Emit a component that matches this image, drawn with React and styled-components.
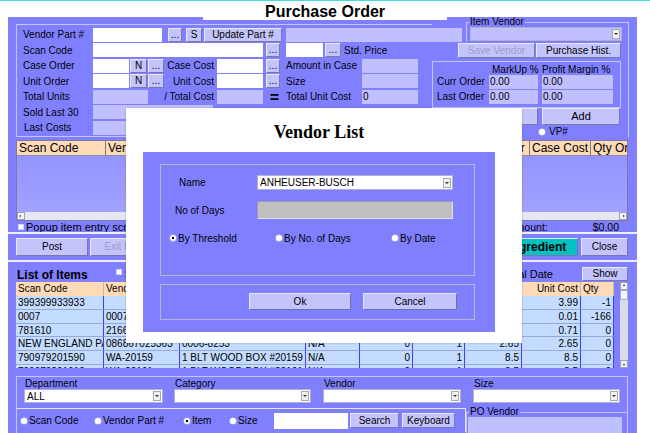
import styled, { createGlobalStyle } from "styled-components";

const GlobalStyle = createGlobalStyle`
  html, body { margin: 0; padding: 0; background: #ffffff; }
  body {
    font-family: "Liberation Sans", Arial, sans-serif;
    font-size: 10px;
    color: #000;
  }
  *, *::before, *::after { box-sizing: border-box; }
`;

const scanColumns = [
  { name: "Scan Code", w: 89 },
  { name: "Vendor Part #", w: 104 },
  { name: "Description", w: 150 },
  { name: "Size", w: 50 },
  { name: "Unit Cost", w: 60 },
  { name: "Qty Order", w: 60 },
  { name: "Case Cost", w: 61 },
  { name: "Qty Ordered", w: 80 },
];

const listColumns = [
  { name: "Scan Code", w: 88 },
  { name: "Vendor Part #", w: 76 },
  { name: "Description", w: 126 },
  { name: "Size", w: 54 },
  { name: "On Hand", w: 53, right: true },
  { name: "Case Qty", w: 52, right: true },
  { name: "Case Cost", w: 57, right: true },
  { name: "Unit Cost", w: 59, right: true, headRight: true },
  { name: "Qty", w: 33, right: true },
];

const items = [
  ["399399933933", "", "", "", "0", "1", "3.99", "3.99", "-1"],
  ["0007", "0007", "ITEM 0007", "N/A", "0", "1", "0.01", "0.01", "-166"],
  ["781610", "21660", "ITEM 781610", "N/A", "0", "1", "0.71", "0.71", "0"],
  ["NEW ENGLAND PATRIOTS", "086867025363", "0006-8253", "N/A", "0", "1", "2.65", "2.65", "0"],
  ["790979201590", "WA-20159", "1 BLT WOOD BOX #20159", "N/A", "0", "1", "8.5", "8.5", "0"],
  ["790979201613", "WA-20161", "1 BLT WOOD BOX #20161", "N/A", "0", "1", "8.5", "8.5", "0"],
];

export default function App() {
  return (
    <>
      <GlobalStyle />
      <Page>
        <Title>
          <span>Purchase Order</span>
        </Title>
        <Panel>
          <TopSection>
            <EntryGroup>
              <Row>
                <Lbl $w={70}>Vendor Part #</Lbl>
                <Field $w={69} />
                <Btn $w={14} $ml={6}>...</Btn>
                <Btn $w={16} $ml={4}>S</Btn>
                <Btn $w={78} $ml={2}>Update Part #</Btn>
                <Field $w={176} $ml={4} $light />
              </Row>
              <Row>
                <Lbl $w={70}>Scan Code</Lbl>
                <Field $w={170} />
                <Btn $w={14} $ml={3}>...</Btn>
                <Field $w={37} $ml={6} />
                <Btn $w={16} $ml={2}>...</Btn>
                <Lbl $w={60} $ml={3}>Std. Price</Lbl>
              </Row>
              <Row>
                <Lbl $w={70}>Case Order</Lbl>
                <Field $w={36} />
                <Btn $w={17} $ml={1}>N</Btn>
                <Btn $w={16} $ml={1}>...</Btn>
                <Lbl $w={50} $right>Case Cost</Lbl>
                <Field $w={46} $ml={3} />
                <Btn $w={14} $ml={3}>...</Btn>
                <Lbl $w={76} $ml={6}>Amount in Case</Lbl>
                <Field $w={56} $light />
              </Row>
              <Row>
                <Lbl $w={70}>Unit Order</Lbl>
                <Field $w={36} />
                <Btn $w={17} $ml={1}>N</Btn>
                <Btn $w={16} $ml={1}>...</Btn>
                <Lbl $w={50} $right>Unit Cost</Lbl>
                <Field $w={46} $ml={3} />
                <Btn $w={14} $ml={3}>...</Btn>
                <Lbl $w={76} $ml={6}>Size</Lbl>
                <Field $w={56} $light />
              </Row>
              <Row>
                <Lbl $w={70}>Total Units</Lbl>
                <Field $w={55} $light />
                <Lbl $w={66} $right>/ Total Cost</Lbl>
                <Field $w={46} $ml={3} $light />
                <Equals>=</Equals>
                <Lbl $w={76}>Total Unit Cost</Lbl>
                <Field $w={56} $light>0</Field>
              </Row>
              <Row>
                <Lbl $w={70}>Sold Last 30</Lbl>
                <Field $w={120} $light />
              </Row>
              <Row>
                <Lbl $w={70} $pl={1}>Last Costs</Lbl>
                <Field $w={120} $light />
              </Row>
            </EntryGroup>

            <RightColumn>
              <Frame $ml={34} $w={163}>
                <legend>Item Vendor</legend>
                <Combo $w={152} $ml={3} $bg="#c0c0ff">
                  <span />
                  <Arrow />
                </Combo>
              </Frame>
              <LowerRight>
                <Row $h={15} $mt={1}>
                  <Btn $w={77} $h={15} $ml={26} $dim>Save Vendor</Btn>
                  <Btn $w={85} $h={15} $ml={1}>Purchase Hist.</Btn>
                </Row>
                <MarkupBox>
                  <span />
                  <MarkHead $pl={3}>MarkUp %</MarkHead>
                  <MarkHead>Profit Margin %</MarkHead>
                  <MarkLabel>Curr Order</MarkLabel>
                  <Field $w={49} $light>0.00</Field>
                  <Field $w={71} $light>0.00</Field>
                  <MarkLabel>Last Order</MarkLabel>
                  <Field $w={49} $light>0.00</Field>
                  <Field $w={71} $light>0.00</Field>
                </MarkupBox>
                <Row $h={17}>
                  <Btn $w={68} $h={17} $ml={38} $fs={11}>Clear</Btn>
                  <Btn $w={78} $h={17} $ml={4} $fs={11}>Add</Btn>
                </Row>
                <Row $h={9} $mt={2}>
                  <Radio $ml={107} />
                  <Lbl $w={30} $ml={2}>VP#</Lbl>
                </Row>
              </LowerRight>
            </RightColumn>
          </TopSection>

          <ScanTable>
            <ScanHead>
              {scanColumns.map((c) => (
                <ScanHeadCell key={c.name} $w={c.w}>
                  {c.name}
                </ScanHeadCell>
              ))}
            </ScanHead>
            <ScanBody />
            <HScroll>
              <ScrollArrow $dir="left" />
              <ScrollTrack />
              <ScrollArrow $dir="right" />
            </HScroll>
          </ScanTable>

          <PopupRow>
            <Check $ml={2} />
            <PopupText>Popup item entry screen</PopupText>
            <Grow />
            <span>Total Amount:</span>
            <AmountValue>$0.00</AmountValue>
          </PopupRow>

          <Separator />

          <ActionRow>
            <Btn $w={72} $h={18}>Post</Btn>
            <Btn $w={72} $h={18} $ml={2} $dim>Exit Form</Btn>
            <Btn $w={72} $h={18} $ml={2}>Print</Btn>
            <Btn $w={72} $h={18} $ml={2}>Receive</Btn>
            <Grow />
            <Btn $w={108} $h={18} $teal $bold $fs={12}>Add Ingredient</Btn>
            <Btn $w={47} $h={18} $ml={3}>Close</Btn>
          </ActionRow>

          <Separator $mt={4} />

          <ListHeader>
            <ListTitle>List of Items</ListTitle>
            <Check $ml={28} $mb={7} />
            <ListHeadText $ml={3}>Show All Items</ListHeadText>
            <Grow />
            <ListHeadText>Sort by Arrival Date</ListHeadText>
            <Btn $w={46} $h={14} $ml={29} $mb={1}>Show</Btn>
          </ListHeader>

          <ListArea>
            <ListTable>
              <ListHeadRow>
                {listColumns.map((c) => (
                  <ListHeadCell key={c.name} $w={c.w} $right={c.headRight}>
                    {c.name}
                  </ListHeadCell>
                ))}
              </ListHeadRow>
              {items.map((row, i) => (
                <ListRow key={i}>
                  {row.map((v, j) => (
                    <ListCell key={j} $w={listColumns[j].w} $right={listColumns[j].right}>
                      {v}
                    </ListCell>
                  ))}
                </ListRow>
              ))}
            </ListTable>
            <VScroll>
              <ScrollArrow $dir="up" />
              <VThumb />
              <Grow />
              <ScrollArrow $dir="down" />
            </VScroll>
          </ListArea>

          <FilterBox>
            <FilterTop>
              <FilterCol $ml={7}>
                <FilterLabel>Department</FilterLabel>
                <Combo $w={139}>
                  <span>ALL</span>
                  <Arrow />
                </Combo>
              </FilterCol>
              <FilterCol $ml={11}>
                <FilterLabel>Category</FilterLabel>
                <Combo $w={137}>
                  <span />
                  <Arrow />
                </Combo>
              </FilterCol>
              <FilterCol $ml={12}>
                <FilterLabel>Vendor</FilterLabel>
                <Combo $w={138}>
                  <span />
                  <Arrow />
                </Combo>
              </FilterCol>
              <FilterCol $ml={12}>
                <FilterLabel>Size</FilterLabel>
                <Combo $w={147}>
                  <span />
                  <Arrow />
                </Combo>
              </FilterCol>
            </FilterTop>
            <FilterBottom>
              <SearchArea>
                <RadioItem $w={74}>
                  <Radio />
                  Scan Code
                </RadioItem>
                <RadioItem $w={89}>
                  <Radio />
                  Vendor Part #
                </RadioItem>
                <RadioItem $w={46}>
                  <Radio $on />
                  Item
                </RadioItem>
                <RadioItem $w={44}>
                  <Radio />
                  Size
                </RadioItem>
                <Field $w={74} $h={16} />
                <Btn $w={49} $h={15} $ml={2}>Search</Btn>
                <Btn $w={53} $h={15} $ml={3}>Keyboard</Btn>
              </SearchArea>
              <Frame $w={162} $mt={-1}>
                <legend>PO Vendor</legend>
                <Field $w={154} $h={16} $ml={1} $light />
              </Frame>
            </FilterBottom>
          </FilterBox>
        </Panel>

        <Dialog>
          <DialogTitle>Vendor List</DialogTitle>
          <DialogBody>
            <GroupBox $h={112}>
              <DRow $h={15} $mt={10}>
                <DLabel $pl={18}>Name</DLabel>
                <Combo $w={196} $h={15}>
                  <span>ANHEUSER-BUSCH</span>
                  <Arrow />
                </Combo>
              </DRow>
              <DRow $h={18} $mt={11}>
                <DLabel $pl={14}>No of Days</DLabel>
                <GreyInput />
              </DRow>
              <DRow $h={10} $mt={14} $pl={9}>
                <RadioItem $w={106}>
                  <Radio $on />
                  By Threshold
                </RadioItem>
                <RadioItem $w={116}>
                  <Radio />
                  By No. of Days
                </RadioItem>
                <RadioItem $w={80}>
                  <Radio />
                  By Date
                </RadioItem>
              </DRow>
            </GroupBox>
            <GroupBox $h={36} $mt={8}>
              <DRow $h={17} $mt={8}>
                <DialogBtn $w={102} $ml={88}>Ok</DialogBtn>
                <DialogBtn $w={94} $ml={12}>Cancel</DialogBtn>
              </DRow>
            </GroupBox>
          </DialogBody>
        </Dialog>
      </Page>
    </>
  );
}

const Page = styled.div`
  position: relative;
  width: 650px;
  height: 433px;
  overflow: hidden;
  background: #fff;
  border-top: 1px solid #3fdce4;
`;

const Title = styled.h1`
  margin: 0;
  height: 16px;
  font-size: 16px;
  font-weight: bold;
  line-height: 22px;
  text-align: center;
  > span {
    background: #fff;
    padding: 0 62px;
  }
`;

const Panel = styled.div`
  margin-left: 8px;
  width: 629px;
  height: 416px;
  background: #8080ff;
  display: flex;
  flex-direction: column;
`;

const TopSection = styled.div`
  display: flex;
  align-items: flex-start;
  height: 121px;
  padding-left: 8px;
`;

const EntryGroup = styled.div`
  flex: none;
  width: 416px;
  height: 113px;
  margin-top: 7px;
  padding: 2px 0 0 6px;
  border: 1px solid #c4c4ff;
  border-right: none;
`;

const Row = styled.div`
  display: flex;
  align-items: center;
  flex: none;
  height: ${(p) => p.$h || 15.5}px;
  margin-top: ${(p) => p.$mt || 0}px;
  white-space: nowrap;
`;

const Lbl = styled.div`
  flex: none;
  width: ${(p) => p.$w}px;
  margin-left: ${(p) => p.$ml || 0}px;
  padding-left: ${(p) => p.$pl || 0}px;
  text-align: ${(p) => (p.$right ? "right" : "left")};
  font-size: 10px;
  white-space: nowrap;
`;

const Field = styled.div`
  flex: none;
  width: ${(p) => p.$w}px;
  height: ${(p) => p.$h || 14}px;
  margin-left: ${(p) => p.$ml || 0}px;
  padding-left: 1px;
  background: ${(p) => (p.$light ? "#c0c0ff" : "#ffffff")};
  font-size: 10px;
  line-height: ${(p) => p.$h || 14}px;
  overflow: hidden;
  white-space: nowrap;
`;

const Btn = styled.button`
  flex: none;
  width: ${(p) => p.$w}px;
  height: ${(p) => p.$h || 14}px;
  margin: 0 0 ${(p) => p.$mb || 0}px ${(p) => p.$ml || 0}px;
  padding: 0;
  background: ${(p) => (p.$teal ? "#00c2c2" : "#c4c4fc")};
  border: 1px solid;
  border-color: #e8e8ff #7878b0 #7878b0 #e8e8ff;
  font-family: "Liberation Sans", Arial, sans-serif;
  font-size: ${(p) => p.$fs || 10}px;
  font-weight: ${(p) => (p.$bold ? "bold" : "normal")};
  color: ${(p) => (p.$dim ? "#9c9cc8" : "#000")};
  line-height: 1;
  white-space: nowrap;
  overflow: hidden;
  cursor: default;
`;

const Equals = styled.div`
  flex: none;
  width: 23px;
  text-align: center;
  font-size: 16px;
  font-weight: bold;
  line-height: 14px;
  padding-top: 3px;
`;

const RightColumn = styled.div`
  flex: none;
  width: 197px;
  display: flex;
  flex-direction: column;
`;

const Frame = styled.fieldset`
  flex: none;
  width: ${(p) => p.$w}px;
  margin: ${(p) => p.$mt || 0}px 0 0 ${(p) => p.$ml || 0}px;
  padding: 0 0 1px 0;
  min-width: 0;
  border: 1px solid #c4c4ff;
  border-bottom: none;
  > legend {
    padding: 0 1px;
    margin-left: 2px;
    font-size: 10px;
    line-height: 10px;
  }
`;

const Combo = styled.div`
  flex: none;
  display: flex;
  align-items: center;
  width: ${(p) => p.$w}px;
  height: ${(p) => p.$h || 14}px;
  margin-left: ${(p) => p.$ml || 0}px;
  padding-left: 2px;
  background: ${(p) => p.$bg || "#ffffff"};
  border: 1px solid #b0b0d0;
  font-size: 10px;
  > span {
    flex: 1;
    overflow: hidden;
    white-space: nowrap;
  }
`;

const Arrow = styled.i`
  position: relative;
  flex: none;
  width: 8px;
  height: 10px;
  margin-right: 1px;
  background: #f0f0f0;
  border: 1px solid #a8a8a8;
  &::after {
    content: "";
    position: absolute;
    left: 1px;
    top: 3px;
    border-left: 2px solid transparent;
    border-right: 2px solid transparent;
    border-top: 2px solid #333;
  }
`;

const LowerRight = styled.div`
  flex: none;
  height: 95px;
  border-right: 1px solid #c4c4ff;
  display: flex;
  flex-direction: column;
`;

const MarkupBox = styled.div`
  flex: none;
  margin-top: 3px;
  width: 189px;
  height: 47px;
  padding: 3px 0 0 4px;
  border: 1px solid #c4c4ff;
  display: grid;
  grid-template-columns: 52px 53px 71px;
  grid-template-rows: 10px 15px 14px;
  align-items: start;
`;

const MarkHead = styled.div`
  align-self: end;
  padding-left: ${(p) => p.$pl || 0}px;
  font-size: 10px;
  line-height: 10px;
  white-space: nowrap;
`;

const MarkLabel = styled.div`
  font-size: 10px;
  line-height: 14px;
  white-space: nowrap;
`;

const Radio = styled.span`
  display: inline-block;
  flex: none;
  width: 6px;
  height: 6px;
  margin-left: ${(p) => p.$ml || 0}px;
  margin-right: 2px;
  border-radius: 50%;
  background: ${(p) =>
    p.$on ? "radial-gradient(circle, #000 0 1.1px, #fff 1.6px)" : "#ffffff"};
  box-shadow: 0 0 0 0.5px #c8c8e0;
`;

const Check = styled.span`
  flex: none;
  width: 6px;
  height: 6px;
  margin-left: ${(p) => p.$ml || 0}px;
  margin-bottom: ${(p) => p.$mb || 0}px;
  background: #fff;
  border: 1px solid #d0d0e8;
`;

const ScanTable = styled.div`
  flex: none;
  margin: 3px 0 0 8px;
  width: 612px;
  height: 81px;
  display: flex;
  flex-direction: column;
  border: 1px solid #7a7aa8;
  overflow: hidden;
`;

const ScanHead = styled.div`
  flex: none;
  display: flex;
  height: 15px;
  background: #ffdab6;
  border-bottom: 1px solid #8a8aa0;
`;

const ScanHeadCell = styled.div`
  flex: none;
  width: ${(p) => p.$w}px;
  padding-left: 2px;
  font-size: 12px;
  line-height: 14px;
  border-right: 1px solid #7a7a90;
  white-space: nowrap;
  overflow: hidden;
`;

const ScanBody = styled.div`
  flex: 1;
  background: linear-gradient(#9494ff, #a2a2ff);
`;

const HScroll = styled.div`
  flex: none;
  display: flex;
  height: 8px;
  background: #e6e6f4;
`;

const ScrollTrack = styled.div`
  flex: 1;
`;

const VThumb = styled.div`
  flex: none;
  height: 10px;
  background: #f4f4ff;
  border: 1px solid #a8a8c8;
`;

const ScrollArrow = styled.div`
  position: relative;
  flex: none;
  width: 8px;
  height: 8px;
  background: #f4f4fa;
  border: 1px solid #a0a0b8;
  &::after {
    content: "";
    position: absolute;
    left: 2px;
    top: 2px;
    border: 1.5px solid transparent;
    ${(p) =>
      p.$dir === "left"
        ? "border-right: 2px solid #222; left: 0;"
        : p.$dir === "right"
        ? "border-left: 2px solid #222; left: 3px;"
        : p.$dir === "up"
        ? "border-bottom: 2px solid #222; top: 0;"
        : "border-top: 2px solid #222; top: 3px;"}
  }
`;

const PopupRow = styled.div`
  flex: none;
  display: flex;
  align-items: center;
  margin-left: 8px;
  width: 612px;
  height: 11px;
  font-size: 10.5px;
`;

const PopupText = styled.span`
  margin-left: 2px;
  font-size: 11px;
`;

const Grow = styled.div`
  flex: 1;
`;

const AmountValue = styled.span`
  margin: 0 9px 0 45px;
`;

const Separator = styled.div`
  flex: none;
  height: 2px;
  margin-top: ${(p) => p.$mt || 0}px;
  background: #eeeeff;
`;

const ActionRow = styled.div`
  flex: none;
  display: flex;
  align-items: center;
  margin: 4px 0 0 8px;
  width: 612px;
  height: 18px;
`;

const ListHeader = styled.div`
  flex: none;
  display: flex;
  align-items: flex-end;
  margin: 3px 0 0 8px;
  width: 612px;
  height: 17px;
`;

const ListTitle = styled.div`
  margin-left: 1px;
  font-size: 12px;
  font-weight: bold;
  line-height: 14px;
`;

const ListHeadText = styled.div`
  margin-left: ${(p) => p.$ml || 0}px;
  font-size: 11px;
  line-height: 14px;
  padding-bottom: 1px;
  white-space: nowrap;
`;

const ListArea = styled.div`
  flex: none;
  display: flex;
  margin-left: 8px;
  width: 612px;
  height: 86px;
`;

const ListTable = styled.div`
  flex: none;
  width: 598px;
  height: 100%;
  overflow: hidden;
`;

const ListHeadRow = styled.div`
  display: flex;
  height: 14px;
  background: #ffdab6;
`;

const ListHeadCell = styled.div`
  flex: none;
  width: ${(p) => p.$w}px;
  padding: 0 2px;
  text-align: ${(p) => (p.$right ? "right" : "left")};
  font-size: 10px;
  line-height: 14px;
  border-right: 1px solid #c8b8a8;
  white-space: nowrap;
  overflow: hidden;
`;

const ListRow = styled.div`
  display: flex;
  height: 13.8px;
  background: #c3dcff;
`;

const ListCell = styled.div`
  flex: none;
  width: ${(p) => p.$w}px;
  padding: 0 2px;
  text-align: ${(p) => (p.$right ? "right" : "left")};
  font-size: 10px;
  line-height: 13px;
  border-right: 1px solid #3c3cff;
  border-bottom: 1px solid #98a8d8;
  white-space: nowrap;
  overflow: hidden;
`;

const VScroll = styled.div`
  flex: none;
  display: flex;
  flex-direction: column;
  width: 8px;
  margin-left: 6px;
  background: #dcdcf0;
`;

const FilterBox = styled.div`
  flex: none;
  margin: 8px 0 0 8px;
  width: 612px;
  height: 60px;
  border: 1px solid #c4c4ff;
  border-bottom: none;
`;

const FilterTop = styled.div`
  display: flex;
  padding-top: 1px;
`;

const FilterCol = styled.div`
  display: flex;
  flex-direction: column;
  margin-left: ${(p) => p.$ml}px;
`;

const FilterLabel = styled.div`
  height: 11px;
  padding-left: 1px;
  font-size: 10px;
  line-height: 11px;
`;

const FilterBottom = styled.div`
  display: flex;
  align-items: flex-start;
  margin-top: 5px;
`;

const SearchArea = styled.div`
  flex: none;
  display: flex;
  align-items: center;
  width: 449px;
  height: 24px;
  padding-left: 4px;
  border-top: 1px solid #e4e4ff;
  border-right: 1px solid #e4e4ff;
`;

const RadioItem = styled.label`
  flex: none;
  display: flex;
  align-items: center;
  width: ${(p) => p.$w}px;
  font-size: 10px;
  white-space: nowrap;
`;

const Dialog = styled.div`
  position: absolute;
  left: 126px;
  top: 107px;
  width: 396px;
  height: 235px;
  background: #ffffff;
  box-shadow: 0 0 2px rgba(0, 0, 0, 0.25);
`;

const DialogTitle = styled.h2`
  margin: 0 27px 0 17px;
  height: 44px;
  padding-top: 4px;
  font-family: "Liberation Serif", "Times New Roman", serif;
  font-size: 18px;
  font-weight: bold;
  line-height: 40px;
  text-align: center;
`;

const DialogBody = styled.div`
  margin: 0 27px 0 17px;
  height: 180px;
  padding: 12px 0 0 17px;
  background: #8080ff;
`;

const GroupBox = styled.div`
  width: 315px;
  height: ${(p) => p.$h}px;
  margin-top: ${(p) => p.$mt || 0}px;
  border: 1px solid #b6b6dc;
  padding-top: 0.1px;
`;

const DRow = styled.div`
  display: flex;
  align-items: center;
  height: ${(p) => p.$h}px;
  margin-top: ${(p) => p.$mt || 0}px;
  padding-left: ${(p) => p.$pl || 0}px;
`;

const DLabel = styled.div`
  flex: none;
  width: 96px;
  padding-left: ${(p) => p.$pl}px;
  font-size: 10px;
`;

const GreyInput = styled.div`
  flex: none;
  width: 196px;
  height: 18px;
  background: #c0c0c0;
  border: 1px solid;
  border-color: #9a9ab0 #e0e0f0 #e0e0f0 #9a9ab0;
`;

const DialogBtn = styled.button`
  flex: none;
  width: ${(p) => p.$w}px;
  height: 17px;
  margin: 0 0 0 ${(p) => p.$ml}px;
  padding: 0;
  background: #c4c4fc;
  border: 1px solid;
  border-color: #e8e8ff #7070a8 #7070a8 #e8e8ff;
  font-family: "Liberation Sans", Arial, sans-serif;
  font-size: 10px;
  color: #000;
  cursor: default;
`;
